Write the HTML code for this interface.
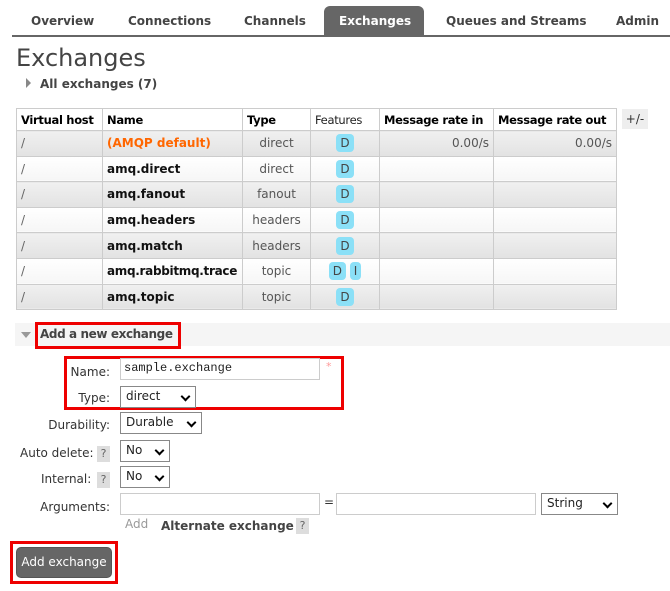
<!DOCTYPE html>
<html><head><meta charset="utf-8"><style>
*{margin:0;padding:0;box-sizing:border-box}
body{width:670px;height:591px;background:#fff;font-family:"DejaVu Sans","Liberation Sans",sans-serif;font-size:12px;color:#333;position:relative;overflow:hidden}
.a{position:absolute;white-space:nowrap}
.nav{font-weight:bold;color:#444;top:14px}
table{position:absolute;left:16px;top:108px;border-collapse:collapse;width:600px;table-layout:fixed}
td,th{border:1px solid #ccc;height:25.6px;padding:0 4px;text-align:left;font-size:12px;white-space:nowrap;overflow:hidden}
th{height:22px;color:#000;background:#fff;font-size:11.5px;letter-spacing:-0.3px}
tr.g td{background:linear-gradient(#f0f0f0,#e2e2e2)}
tr.w td{background:linear-gradient(#fff,#f6f6f6)}
.b{font-weight:bold;color:#111}
.c{text-align:center;color:#555}
.r{text-align:right;color:#555}
.d{display:inline-block;background:#8be0f7;border-radius:4px;padding:1px 4px;font-size:12px;color:#444;line-height:16px}
.red{position:absolute;border:3px solid #e00}
.lbl{position:absolute;text-align:right;width:110px;left:0;color:#333}
.sel{position:absolute;border:1px solid #888;background:#fff;height:22px;padding:2px 5px;color:#222;font-size:12px}
.sel:after{content:"";position:absolute;right:6px;top:6px;width:5px;height:5px;border-right:2px solid #000;border-bottom:2px solid #000;transform:rotate(45deg)}
.inp{position:absolute;border:1px solid #ccc;background:#fff;height:22px}
.q{position:absolute;background:#ddd;color:#666;width:13px;height:16px;text-align:center;font-size:11px;line-height:16px}
</style></head><body>
<div class="a" style="left:12px;top:35px;width:658px;height:2px;background:#666"></div>
<div class="a" style="left:324px;top:6px;width:100px;height:30px;background:#666;border-radius:6px 6px 0 0"></div>
<div class="a nav" style="left:31px">Overview</div>
<div class="a nav" style="left:128px">Connections</div>
<div class="a nav" style="left:244px">Channels</div>
<div class="a nav" style="left:339px;color:#fff">Exchanges</div>
<div class="a nav" style="left:446px">Queues and Streams</div>
<div class="a nav" style="left:616px">Admin</div>
<div class="a" style="left:16px;top:44px;font-size:24px;color:#444">Exchanges</div>
<div class="a" style="left:26px;top:78px;width:0;height:0;border-left:5px solid #888;border-top:5px solid transparent;border-bottom:5px solid transparent"></div>
<div class="a" style="left:40px;top:77px;font-weight:bold;color:#444;font-size:12px">All exchanges (7)</div>
<table>
<colgroup><col style="width:86px"><col style="width:140px"><col style="width:68px"><col style="width:69px"><col style="width:114px"><col style="width:123px"></colgroup>
<tr><th>Virtual host</th><th>Name</th><th>Type</th><th style="font-weight:normal;color:#222">Features</th><th>Message rate in</th><th>Message rate out</th></tr>
<tr class="g"><td style="color:#666">/</td><td class="b" style="color:#f60">(AMQP default)</td><td class="c">direct</td><td class="c"><span class="d">D</span></td><td class="r">0.00/s</td><td class="r">0.00/s</td></tr>
<tr class="w"><td style="color:#666">/</td><td class="b">amq.direct</td><td class="c">direct</td><td class="c"><span class="d">D</span></td><td></td><td></td></tr>
<tr class="g"><td style="color:#666">/</td><td class="b">amq.fanout</td><td class="c">fanout</td><td class="c"><span class="d">D</span></td><td></td><td></td></tr>
<tr class="w"><td style="color:#666">/</td><td class="b">amq.headers</td><td class="c">headers</td><td class="c"><span class="d">D</span></td><td></td><td></td></tr>
<tr class="g"><td style="color:#666">/</td><td class="b">amq.match</td><td class="c">headers</td><td class="c"><span class="d">D</span></td><td></td><td></td></tr>
<tr class="w"><td style="color:#666">/</td><td class="b" style="letter-spacing:-0.3px">amq.rabbitmq.trace</td><td class="c">topic</td><td class="c"><span class="d">D</span> <span class="d">I</span></td><td></td><td></td></tr>
<tr class="g"><td style="color:#666">/</td><td class="b">amq.topic</td><td class="c">topic</td><td class="c"><span class="d">D</span></td><td></td><td></td></tr>
</table>
<div class="a" style="left:622px;top:109px;width:26px;height:20px;background:#eee;text-align:center;line-height:20px;color:#333">+/-</div>
<div class="a" style="left:15px;top:323px;width:655px;height:23px;background:#f5f5f5"></div>
<div class="a" style="left:21px;top:332px;width:0;height:0;border-top:6px solid #999;border-left:5px solid transparent;border-right:5px solid transparent"></div>
<div class="a" style="left:40px;top:327px;font-weight:bold;color:#444;letter-spacing:-0.4px">Add a new exchange</div>
<div class="red" style="left:35px;top:322px;width:146px;height:27px"></div>
<div class="red" style="left:64px;top:356px;width:280px;height:54px"></div>
<div class="lbl" style="top:365px">Name:</div>
<div class="inp" style="left:120px;top:358px;width:200px"></div>
<div class="a" style="left:124px;top:361px;font-family:'Liberation Mono',monospace;font-size:12px;color:#222">sample.exchange</div>
<div class="a" style="left:326px;top:360px;color:#f99;font-size:11px">*</div>
<div class="lbl" style="top:391px">Type:</div>
<div class="sel" style="left:120px;top:386px;width:76px">direct</div>
<div class="lbl" style="top:418px">Durability:</div>
<div class="sel" style="left:120px;top:412px;width:82px">Durable</div>
<div class="a" style="left:20px;top:446px">Auto delete:</div>
<div class="q" style="left:97px;top:446px">?</div>
<div class="sel" style="left:120px;top:440px;width:50px">No</div>
<div class="a" style="left:41px;top:472px">Internal:</div>
<div class="q" style="left:97px;top:472px">?</div>
<div class="sel" style="left:120px;top:466px;width:50px">No</div>
<div class="lbl" style="top:500px">Arguments:</div>
<div class="inp" style="left:120px;top:493px;width:200px"></div>
<div class="a" style="left:324px;top:495px">=</div>
<div class="inp" style="left:336px;top:493px;width:200px"></div>
<div class="sel" style="left:541px;top:493px;width:77px">String</div>
<div class="a" style="left:125px;top:517px;color:#999">Add</div>
<div class="a" style="left:161px;top:519px;font-weight:bold;color:#444">Alternate exchange</div>
<div class="q" style="left:296px;top:518px">?</div>
<div class="red" style="left:10px;top:541px;width:108px;height:43px"></div>
<div class="a" style="left:16px;top:547px;width:96px;height:31px;background:#666;border-radius:5px;border:1px solid #555;color:#fff;text-align:center;line-height:29px;font-size:12px">Add exchange</div>
</body></html>
